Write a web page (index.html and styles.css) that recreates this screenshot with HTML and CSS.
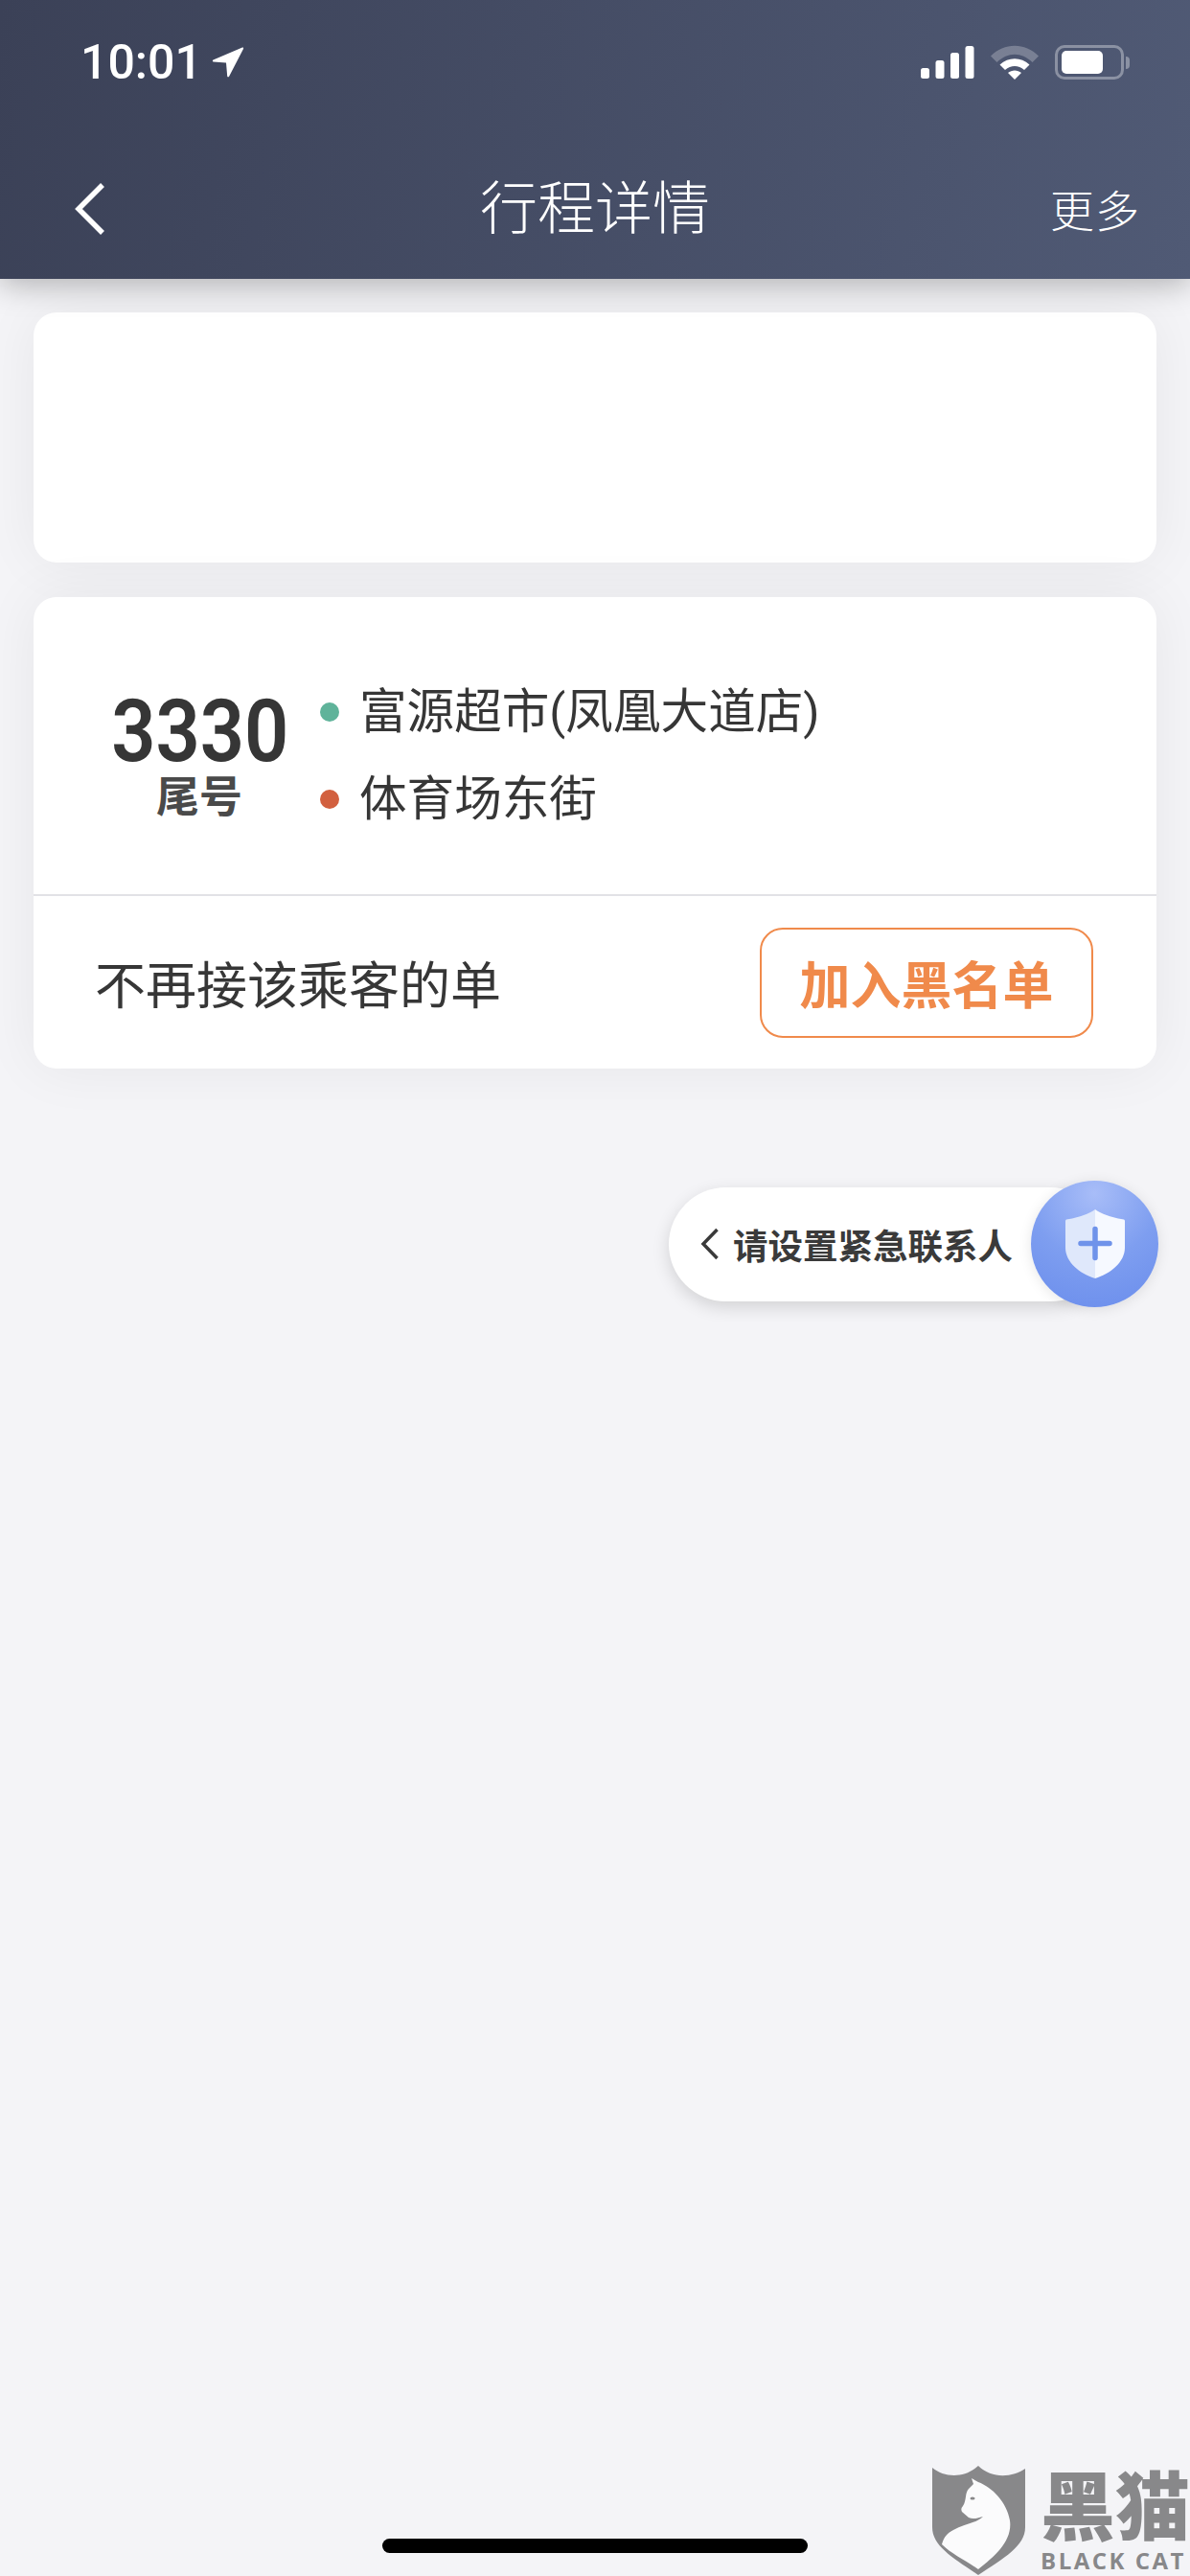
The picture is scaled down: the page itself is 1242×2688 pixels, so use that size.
FILE: index.html
```html
<!DOCTYPE html>
<html lang="zh-CN">
<head>
  <meta charset="UTF-8" />
  <meta name="viewport" content="width=device-width, initial-scale=1.0" />
  <title>行程详情</title>
  <link rel="stylesheet" href="styles.css">
</head>
<body>
  <div class="page">
    <header class="header">
      <div class="status-bar">
        <div class="status-left">
          <span class="time">10:01</span>
          <svg class="loc-icon" width="34" height="34" viewBox="0 0 34 34"><path d="M32 1.500 1.500 14.500c-1 .5-.8 1.800.3 1.900L15 17.500l1.200 14c.1 1 1.400 1.200 1.900.3L33 3c.4-1-.2-1.800-1-1.500z" fill="#fff"/></svg>
        </div>
        <div class="status-right">
          <svg width="56" height="34" viewBox="0 0 56 34"><g fill="#fff"><rect x="0" y="23" width="9" height="11" rx="2.500"/><rect x="15.500" y="15" width="9" height="19" rx="2.500"/><rect x="31" y="7" width="9" height="27" rx="2.500"/><rect x="46.500" y="0" width="9" height="34" rx="2.500"/></g></svg>
          <svg class="wifi-icon" width="50" height="36" viewBox="0 0 50 36"><path d="M0 11.500C14-3 36-3 50 11.500L43.500 18C32 7 18 7 6.500 18z" fill="#fff" opacity=".25"/><path d="M9.500 20.500c9-8.500 22-8.500 31 0L35 26c-6-5.500-14-5.500-20 0z" fill="#fff"/><path d="M18 29c4-3.500 10-3.500 14 0l-7 7z" fill="#fff"/></svg>
          <div class="battery">
            <div class="battery-body"><div class="battery-fill"></div></div>
            <div class="battery-cap"></div>
          </div>
        </div>
      </div>
      <div class="nav-bar">
        <svg class="back-icon" width="34" height="54" viewBox="0 0 34 54"><path d="M30 2 5 27l25 25" fill="none" stroke="#fff" stroke-width="5.500"/></svg>
        <h1 class="nav-title">行程详情</h1>
        <span class="nav-more">更多</span>
      </div>
    </header>

    <main class="content">
      <section class="card card-empty"></section>

      <section class="card trip-card">
        <div class="trip-info">
          <div class="tail">
            <div class="tail-number">3330</div>
            <div class="tail-label">尾号</div>
          </div>
          <div class="route">
            <div class="route-row"><span class="dot dot-start"></span>富源超市(凤凰大道店)</div>
            <div class="route-row"><span class="dot dot-end"></span>体育场东街</div>
          </div>
        </div>
        <div class="block-row">
          <span class="block-text">不再接该乘客的单</span>
          <button class="block-btn">加入黑名单</button>
        </div>
      </section>

      <div class="safety">
        <div class="safety-pill">
          <svg width="20" height="34" viewBox="0 0 20 34"><path d="M17.500 2 3 17l14.500 15" fill="none" stroke="#3a3a3a" stroke-width="3.500"/></svg>
          <span>请设置紧急联系人</span>
        </div>
        <div class="safety-btn">
          <svg width="62" height="72" viewBox="0 0 62 72">
            <path d="M31 0C24 5 12 9 1 10.500 0 11 0 12 0 13v27c0 15 15 27 31 32z" fill="#dfe8fb"/>
            <path d="M31 0c7 5 19 9 30 10.500 1 .5 1 1.500 1 2.500v27C62 55 47 67 31 72z" fill="#f6f9ff"/>
            <path d="M31 20.500v30M16 35.500h30" fill="none" stroke="#6f93ea" stroke-width="5.500" stroke-linecap="round"/>
          </svg>
        </div>
      </div>
    </main>

    <div class="watermark">
      <svg width="98" height="115" viewBox="0 0 98 115">
        <path d="M0 2C12 12 33 14 48 0 62 14 84 12 97 3V64C97 84 75 96 48 114 22 96 0 84 0 64z" fill="#88888a"/>
        <path d="M41 13l7 4C62 22 78 38 81 57 84 78 66 94 48 108 34 98 20 92 10 82 12 74 16 70 22 67 32 61 46 60 53 53 46 55 42 56 38 54L31 48C30 46 30 44 32 42 36 36 34 28 38 24l5-5z" fill="#fbfbfc"/>
        <ellipse cx="42" cy="34" rx="2.500" ry="1.500" fill="#88888a"/>
      </svg>
      <div class="watermark-text">
        <div class="watermark-cn">黑猫</div>
        <div class="watermark-en">BLACK CAT</div>
      </div>
    </div>

    <div class="home-bar"></div>
  </div>
</body>
</html>
```

FILE: styles.css
```css
* {
  box-sizing: border-box;
}
body {
  margin: 0;
  font-family: "Roboto", "Noto Sans CJK SC", sans-serif;
  color: #363636;
  background: #f4f4f7;
}
.page {
  position: relative;
  width: 1242px;
  height: 2688px;
  overflow: hidden;
  background: #f4f4f7;
}

/* header */
.header {
  position: relative;
  z-index: 1;
  height: 291px;
  padding: 0 52px;
  color: #fff;
  background: linear-gradient(100deg, #3b4157 0%, #505a75 100%);
  box-shadow: 0 6px 30px rgba(0, 0, 0, 0.28);
}
.status-bar {
  display: flex;
  justify-content: space-between;
  align-items: center;
  height: 130px;
}
.status-left {
  display: flex;
  align-items: center;
  gap: 10px;
  margin-left: 32px;
}
.time {
  font-size: 50px;
  font-weight: 500;
  line-height: 1;
}
.loc-icon {
  margin-top: -1px;
}
.status-right {
  display: flex;
  align-items: center;
  gap: 17px;
  margin-right: 11px;
}
.battery {
  display: flex;
  align-items: center;
  gap: 2px;
}
.battery-body {
  width: 72px;
  height: 36px;
  padding: 3px 4px;
  border: 3px solid rgba(255, 255, 255, 0.35);
  border-radius: 10px;
}
.battery-fill {
  width: 43px;
  height: 100%;
  background: #fff;
  border-radius: 5px;
}
.battery-cap {
  width: 4px;
  height: 13px;
  background: rgba(255, 255, 255, 0.35);
  border-radius: 0 4px 4px 0;
}
.nav-bar {
  display: grid;
  grid-template-columns: 1fr auto 1fr;
  align-items: center;
  height: 90px;
  margin-top: 43px;
}
.back-icon {
  margin-left: 25px;
}
.nav-title {
  margin: 2px 0 0;
  font-size: 60px;
  font-weight: 300;
  line-height: 1;
}
.nav-more {
  justify-self: end;
  margin-bottom: 2px;
  font-size: 46px;
  font-weight: 300;
  letter-spacing: 1px;
}

/* cards */
.content {
  display: flex;
  flex-direction: column;
  gap: 36px;
  padding: 35px 35px 0;
}
.card {
  background: #fff;
  border-radius: 24px;
  box-shadow: 0 0 60px rgba(0, 0, 0, 0.06);
}
.card-empty {
  height: 261px;
}
.trip-card {
  height: 492px;
  display: flex;
  flex-direction: column;
}
.trip-info {
  display: flex;
  align-items: center;
  height: 312px;
  padding: 20px 0 0 81px;
  border-bottom: 2px solid #e2e2e6;
}
.tail {
  width: 184px;
  padding-top: 8px;
  text-align: center;
}
.tail-number {
  width: 204px;
  margin-left: -10px;
  font-size: 90px;
  font-weight: 600;
  line-height: 82px;
  transform: scaleX(0.9);
}
.tail-label {
  font-size: 45px;
  font-weight: 700;
  line-height: 56px;
  color: #4a4a4a;
}
.route {
  display: flex;
  flex-direction: column;
  gap: 37px;
  margin-left: 34px;
}
.route-row {
  display: flex;
  align-items: center;
  font-size: 49.600px;
  font-weight: 400;
  line-height: 54px;
}
.dot {
  width: 20px;
  height: 20px;
  margin-right: 21px;
  border-radius: 50%;
}
.dot-start {
  background: #5fb39a;
}
.dot-end {
  background: #d2603f;
}
.block-row {
  flex: 1;
  display: flex;
  justify-content: space-between;
  align-items: center;
  padding: 0 66px 0 64px;
}
.block-text {
  font-size: 53px;
  font-weight: 400;
}
.block-btn {
  width: 348px;
  height: 115px;
  padding: 0;
  font-family: inherit;
  font-size: 53px;
  font-weight: 700;
  color: #f08a4b;
  background: #fff;
  border: 2px solid #f08a4b;
  border-radius: 24px;
}

/* emergency contact */
.safety {
  display: flex;
  justify-content: flex-end;
  align-items: center;
  margin-top: 81px;
  margin-right: -2px;
}
.safety-pill {
  display: flex;
  align-items: center;
  gap: 14px;
  width: 458px;
  height: 119px;
  margin-right: -80px;
  padding-left: 33px;
  font-size: 36.500px;
  font-weight: 700;
  color: #3a3a3a;
  background: #fff;
  border-radius: 60px;
  box-shadow: 0 6px 18px rgba(0, 0, 0, 0.14);
}
.safety-btn {
  position: relative;
  display: flex;
  justify-content: center;
  align-items: center;
  width: 133px;
  height: 132px;
  border-radius: 50%;
  background: radial-gradient(circle at 50% 10%, #a8bdf8 0%, #7e9ef0 50%, #6a8dec 100%);
  box-shadow: 0 2px 14px rgba(0, 0, 0, 0.1);
}

/* overlays */
.watermark {
  position: absolute;
  left: 973px;
  top: 2573px;
  display: flex;
  gap: 15px;
  color: #88888a;
}
.watermark-text {
  width: 156px;
  padding-top: 8px;
}
.watermark-cn {
  font-size: 78px;
  font-weight: 900;
  line-height: 76px;
  white-space: nowrap;
}
.watermark-en {
  margin-top: 3px;
  font-family: "Open Sans", sans-serif;
  font-size: 24px;
  font-weight: 700;
  line-height: 24px;
  letter-spacing: 2.500px;
  white-space: nowrap;
}
.home-bar {
  position: absolute;
  left: 399px;
  top: 2649px;
  width: 444px;
  height: 15px;
  background: #000;
  border-radius: 8px;
}
```
